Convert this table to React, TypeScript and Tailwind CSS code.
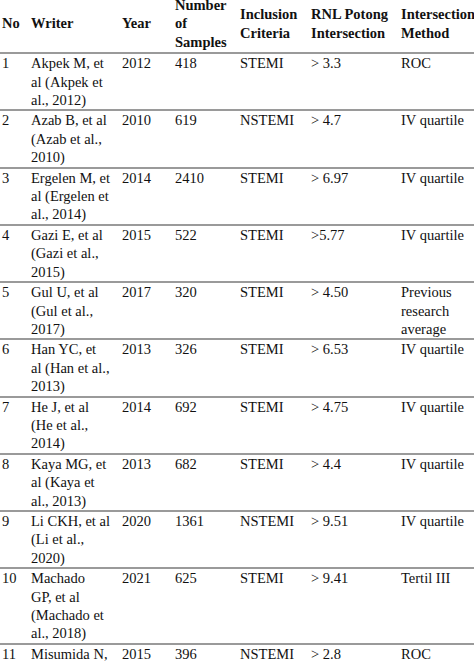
export default function App() {
  const headerLines = [
    ["No"],
    ["Writer"],
    ["Year"],
    ["Number", "of", "Samples"],
    ["Inclusion", "Criteria"],
    ["RNL Potong", "Intersection"],
    ["Intersection", "Method"],
  ]

  const rows = [
    { no: "1", writer: ["Akpek M, et", "al (Akpek et", "al., 2012)"], year: "2012", n: "418", crit: "STEMI", rnl: "> 3.3", method: ["ROC"] },
    { no: "2", writer: ["Azab B, et al", "(Azab et al.,", "2010)"], year: "2010", n: "619", crit: "NSTEMI", rnl: "> 4.7", method: ["IV quartile"] },
    { no: "3", writer: ["Ergelen M, et", "al (Ergelen et", "al., 2014)"], year: "2014", n: "2410", crit: "STEMI", rnl: "> 6.97", method: ["IV quartile"] },
    { no: "4", writer: ["Gazi E, et al", "(Gazi et al.,", "2015)"], year: "2015", n: "522", crit: "STEMI", rnl: ">5.77", method: ["IV quartile"] },
    { no: "5", writer: ["Gul U, et al", "(Gul et al.,", "2017)"], year: "2017", n: "320", crit: "STEMI", rnl: "> 4.50", method: ["Previous", "research", "average"] },
    { no: "6", writer: ["Han YC, et", "al (Han et al.,", "2013)"], year: "2013", n: "326", crit: "STEMI", rnl: "> 6.53", method: ["IV quartile"] },
    { no: "7", writer: ["He J, et al", "(He et al.,", "2014)"], year: "2014", n: "692", crit: "STEMI", rnl: "> 4.75", method: ["IV quartile"] },
    { no: "8", writer: ["Kaya MG, et", "al (Kaya et", "al., 2013)"], year: "2013", n: "682", crit: "STEMI", rnl: "> 4.4", method: ["IV quartile"] },
    { no: "9", writer: ["Li CKH, et al", "(Li et al.,", "2020)"], year: "2020", n: "1361", crit: "NSTEMI", rnl: "> 9.51", method: ["IV quartile"] },
    { no: "10", writer: ["Machado", "GP, et al", "(Machado et", "al., 2018)"], year: "2021", n: "625", crit: "STEMI", rnl: "> 9.41", method: ["Tertil III"] },
    { no: "11", writer: ["Misumida N,", "et al", "(Misumida et", "al., 2015)"], year: "2015", n: "396", crit: "NSTEMI", rnl: "> 2.8", method: ["ROC"] },
  ]

  const lines = (arr: string[]) =>
    arr.map((l, i) => (
      <span key={i} className="block whitespace-nowrap">
        {l}
      </span>
    ))

  const cell = "pl-[2px] pr-0 py-0 text-left align-top"

  return (
    <div className="h-[662px] w-[474px] overflow-hidden bg-white font-['Liberation_Serif','Times_New_Roman',serif] text-[#111]">
      <table className="-mt-[4px] w-[560px] table-fixed border-collapse font-['Liberation_Serif','Times_New_Roman',serif] text-[14.5px] leading-[18.4px]">
        <colgroup>
          <col className="w-[29px]" />
          <col className="w-[91px]" />
          <col className="w-[53px]" />
          <col className="w-[65px]" />
          <col className="w-[71px]" />
          <col className="w-[90px]" />
          <col />
        </colgroup>
        <thead>
          <tr>
            {headerLines.map((h, i) => (
              <th key={i} className="pl-[2px] pb-[1px] text-left align-middle font-bold">
                {lines(h)}
              </th>
            ))}
          </tr>
        </thead>
        <tbody>
          {rows.map((r) => (
            <tr key={r.no} className="border-t-2 border-[#9a9a9a]">
              <td className={cell}>{r.no}</td>
              <td className={cell}>{lines(r.writer)}</td>
              <td className={cell}>{r.year}</td>
              <td className={cell}>{r.n}</td>
              <td className={cell}>{r.crit}</td>
              <td className={cell}>{r.rnl}</td>
              <td className={cell}>{lines(r.method)}</td>
            </tr>
          ))}
        </tbody>
      </table>
    </div>
  )
}
